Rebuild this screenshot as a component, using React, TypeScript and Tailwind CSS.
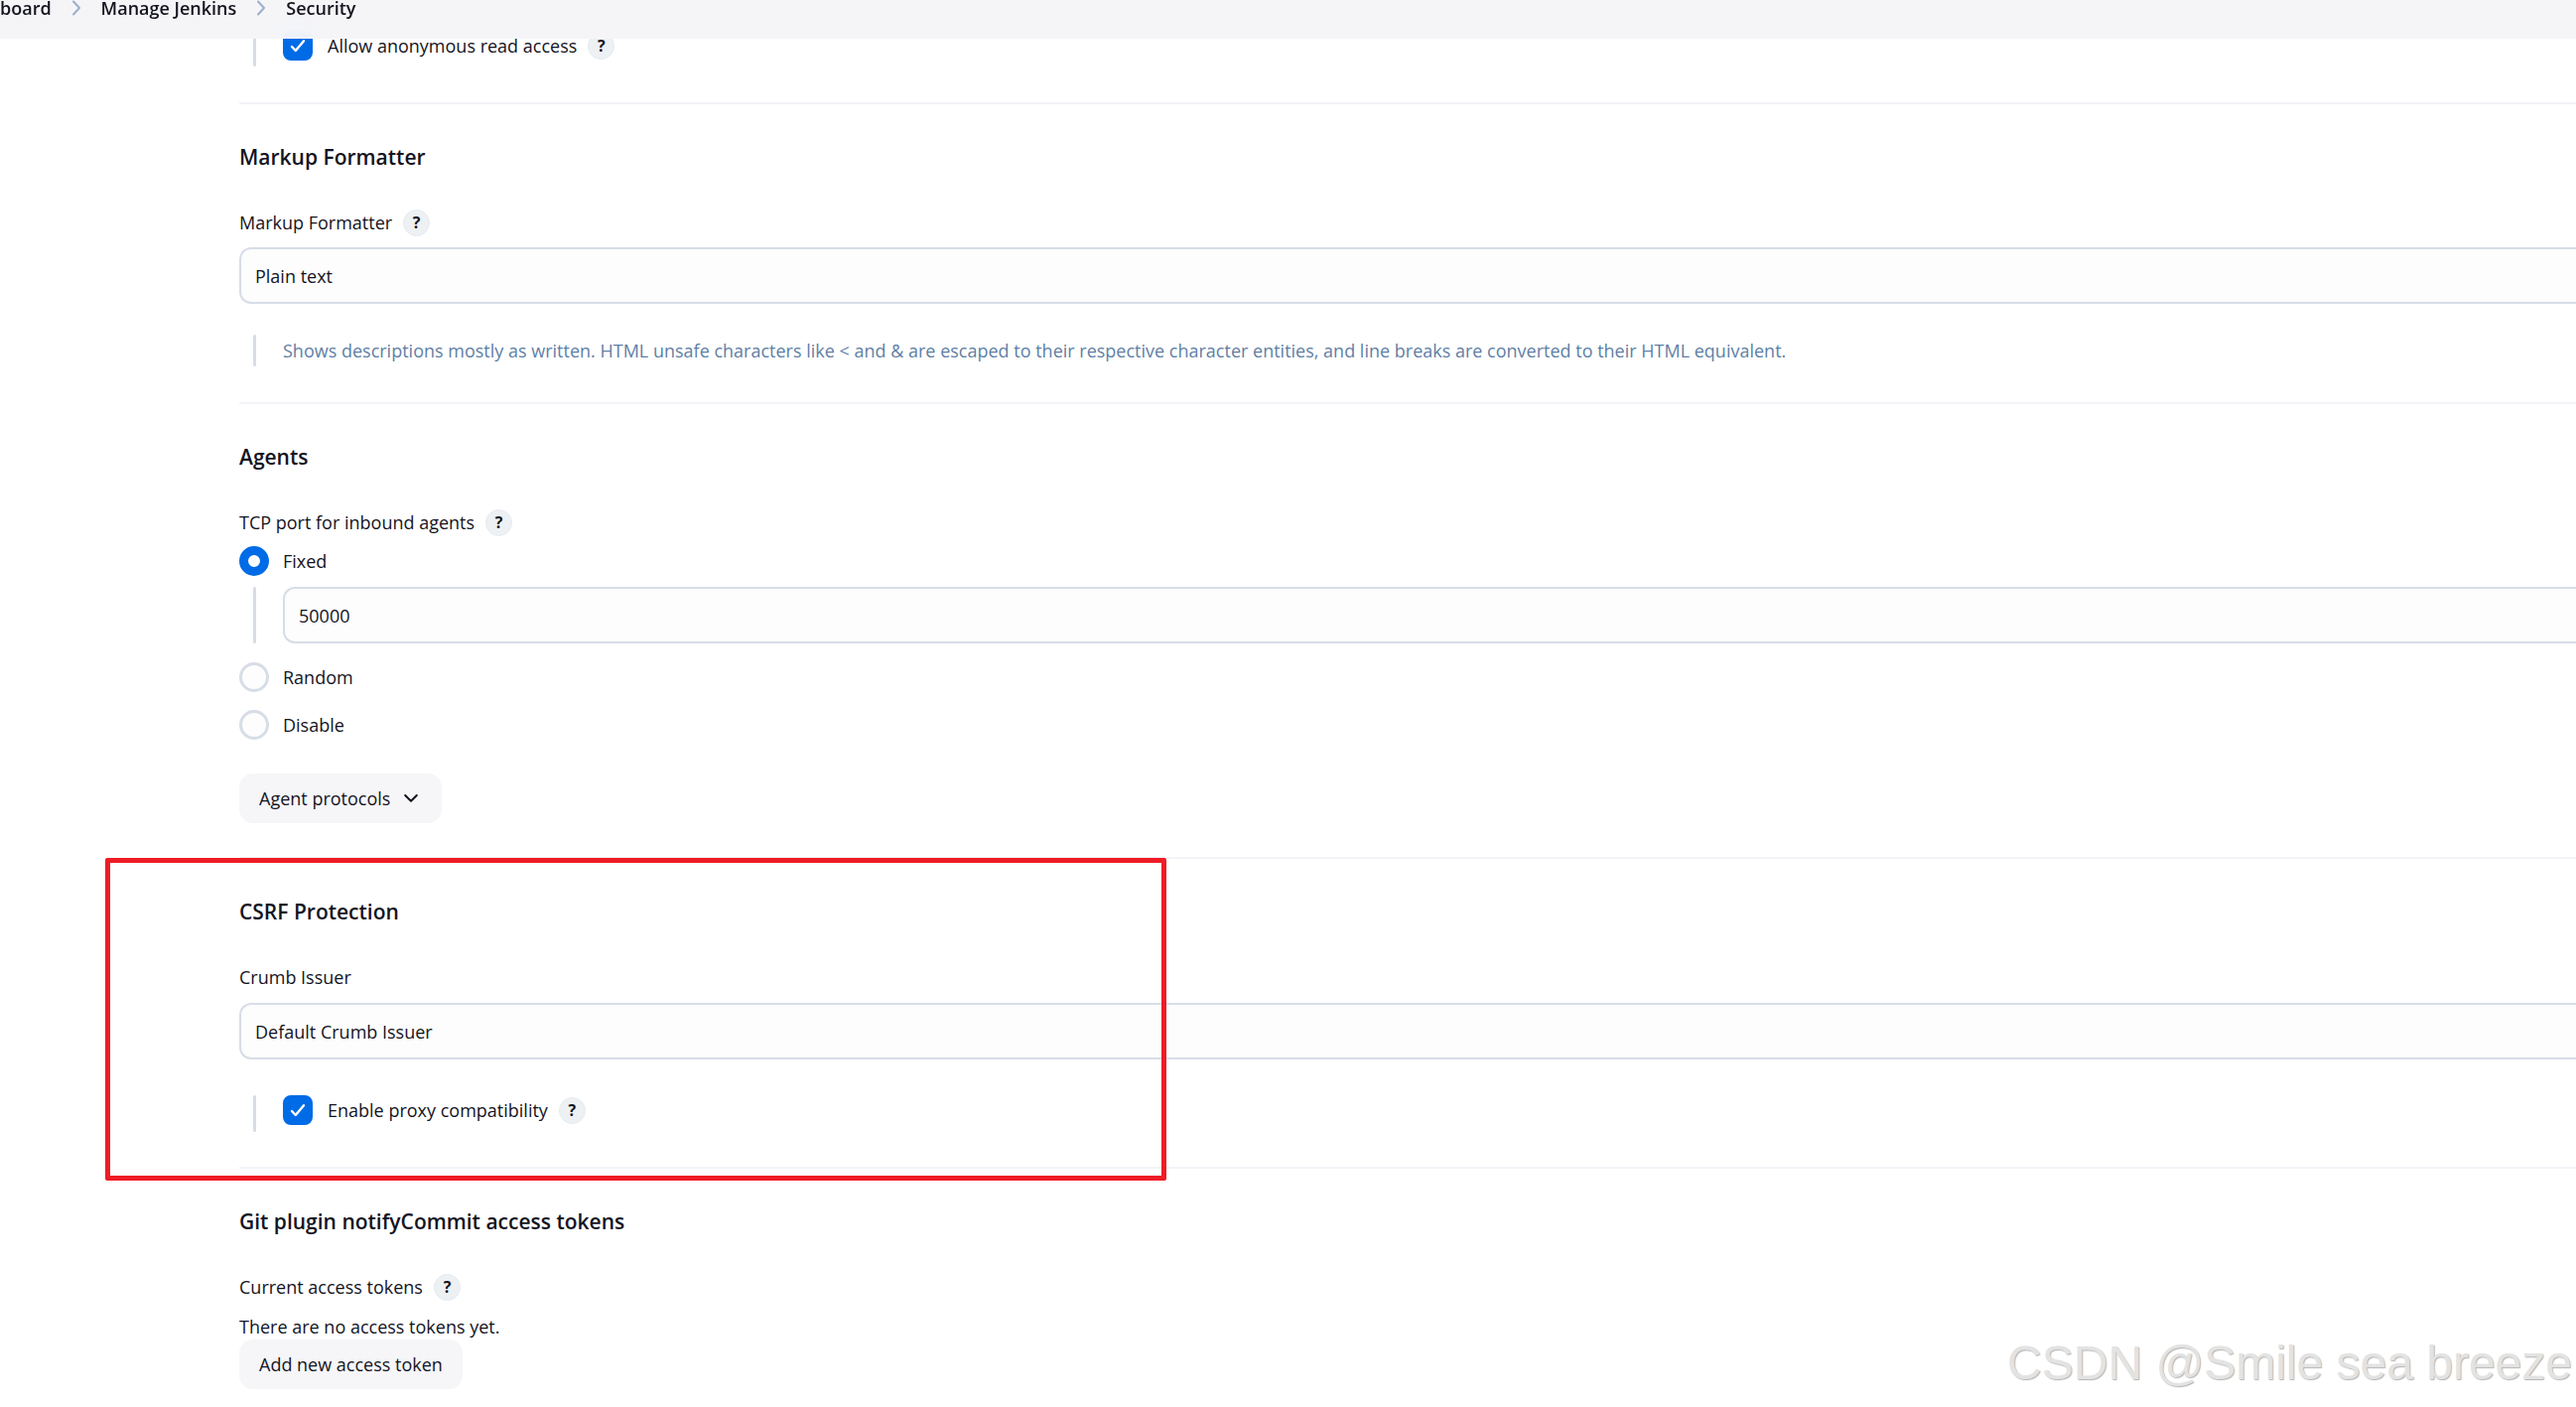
import { useState } from 'react'
import type { ReactNode } from 'react'

const crumbs = ['board', 'Manage Jenkins', 'Security']

function Help({ topic }: { topic: string }) {
  return (
    <button type="button" aria-label={`Help for ${topic}`}
      className="flex h-[27px] w-[27px] items-center justify-center rounded-full border border-[#e6eaef] bg-[#edf1f4] text-[16px] leading-none font-bold text-[#14141f]">
      ?
    </button>
  )
}

function Section({ title, children }: { title: string; children: ReactNode }) {
  return (
    <section className="relative border-t-2 border-[#f3f3f8] pt-[37px]">
      <h2 className="mb-9 text-[21px] leading-8 font-semibold">{title}</h2>
      {children}
    </section>
  )
}

// content nested under an option, with a vertical rule on its left
function Nested({ children }: { children: ReactNode }) {
  return (
    <div className="flex gap-[27px] pl-[14px]">
      <span className="w-[3px] shrink-0 rounded-full bg-[#d7dde7]" />
      <div className="min-w-0 grow">{children}</div>
    </div>
  )
}

function Checkbox({ id, label }: { id: string; label: string }) {
  const [checked, setChecked] = useState(true)

  return (
    <div className="flex items-center">
      <span className="grid h-[30px] w-[30px] place-items-center">
        <input id={id} type="checkbox" checked={checked} onChange={e => setChecked(e.target.checked)}
          className="col-start-1 row-start-1 h-[30px] w-[30px] appearance-none rounded-lg border-2 border-[#d7dde7] bg-[#fdfdfd] checked:border-[#006be6] checked:bg-[#006be6]" />
        {checked && (
          <svg viewBox="0 0 16 16" fill="none" stroke="white" strokeWidth="2.4" strokeLinecap="round" strokeLinejoin="round"
            className="pointer-events-none col-start-1 row-start-1 h-4 w-4">
            <path d="M2 9 5.8 13 14 3.2" />
          </svg>
        )}
      </span>
      <label htmlFor={id} className="mr-[11px] ml-[15px]">{label}</label>
      <Help topic={label} />
    </div>
  )
}

function Select({ id, options }: { id: string; options: string[] }) {
  return (
    <select id={id}
      className="block h-[57px] w-full appearance-none rounded-l-xl border-2 border-r-0 border-[#d7dde7] bg-[#fdfdfd] px-[14px]">
      {options.map(o => <option key={o}>{o}</option>)}
    </select>
  )
}

export default function App() {
  const [port, setPort] = useState('50000')
  const [mode, setMode] = useState('Fixed')

  function radio(value: string) {
    return (
      <label className="flex h-[30px] items-center gap-[14px]">
        <input type="radio" name="port-mode" checked={mode === value} onChange={() => setMode(value)}
          className="h-[30px] w-[30px] appearance-none rounded-full border-[3px] border-[#d7dde7] bg-[#fdfdfd] checked:border-[9px] checked:border-[#006be6] checked:bg-white" />
        {value}
      </label>
    )
  }

  return (
    <div className="relative min-h-screen overflow-hidden bg-white font-['Open_Sans',sans-serif] text-[18px] leading-[26px] text-[#14141f]">
      <header className="sticky top-0 z-10 h-[39px] bg-[#f4f4f8]/95 backdrop-blur-[15px]">
        <nav aria-label="Breadcrumb" className="flex gap-[21px] leading-4 font-semibold">
          {crumbs.map((c, i) => (
            <span key={c} className="flex items-center gap-[21px]">
              {i > 0 && (
                <svg viewBox="0 0 8 16" fill="none" stroke="currentColor" strokeWidth="2" strokeLinecap="round" strokeLinejoin="round" className="h-4 w-2 text-[#9bb0cb]">
                  <path d="M1 1.5 7 8 1 14.5" />
                </svg>
              )}
              <a href="#">{c}</a>
            </span>
          ))}
        </nav>
      </header>

      <main className="-mt-2 pl-[241px]">
        <div className="pb-9">
          <Nested>
            <div className="pb-[6px]">
              <Checkbox id="anonymous-read" label="Allow anonymous read access" />
            </div>
          </Nested>
        </div>

        <Section title="Markup Formatter">
          <div className="mb-[11px] flex h-7 items-center gap-[11px]">
            <label htmlFor="formatter">Markup Formatter</label>
            <Help topic="Markup Formatter" />
          </div>
          <Select id="formatter" options={['Plain text', 'Safe HTML']} />
          <div className="pt-[31px] pb-9">
            <Nested>
              <p className="leading-8 text-[#5f7fa6]">
                Shows descriptions mostly as written. HTML unsafe characters like &lt; and &amp; are escaped to their respective character entities, and line breaks are converted to their HTML equivalent.
              </p>
            </Nested>
          </div>
        </Section>

        <Section title="Agents">
          <div className="mb-[10px] flex h-7 items-center gap-[11px]">
            <span>TCP port for inbound agents</span>
            <Help topic="TCP port for inbound agents" />
          </div>
          {radio('Fixed')}
          <div className="pt-[11px] pb-[19px]">
            <Nested>
              <input type="text" aria-label="Fixed port" value={port} onChange={e => setPort(e.target.value)}
                className="block h-[57px] w-full rounded-l-xl border-2 border-r-0 border-[#d7dde7] bg-[#fdfdfd] px-[14px]" />
            </Nested>
          </div>
          <div className="flex flex-col gap-[18px]">
            {radio('Random')}
            {radio('Disable')}
          </div>
          <div className="py-[34px]">
            <button type="button" className="flex h-[50px] items-center gap-[14px] rounded-[14px] bg-[#f6f6f9] pr-6 pl-5">
              Agent protocols
              <svg viewBox="0 0 14 8" fill="none" stroke="currentColor" strokeWidth="2" strokeLinecap="round" strokeLinejoin="round" className="h-2 w-[14px]">
                <path d="M1.2 1 7 6.8 12.8 1" />
              </svg>
            </button>
          </div>
        </Section>

        <Section title="CSRF Protection">
          <div className="mb-3 flex h-7 items-center">
            <label htmlFor="crumb-issuer">Crumb Issuer</label>
          </div>
          <Select id="crumb-issuer" options={['Default Crumb Issuer', 'Strict Crumb Issuer']} />
          <div className="pt-9 pb-[35px]">
            <Nested>
              <div className="pb-[7px]">
                <Checkbox id="proxy-compat" label="Enable proxy compatibility" />
              </div>
            </Nested>
          </div>
          <div className="pointer-events-none absolute -top-px -bottom-[14px] -left-[135px] z-10 w-[1069px] rounded-xs border-[5px] border-[#ee1c25]" />
        </Section>

        <Section title="Git plugin notifyCommit access tokens">
          <div className="mb-[13px] flex h-7 items-center gap-[11px]">
            <span>Current access tokens</span>
            <Help topic="Current access tokens" />
          </div>
          <p>There are no access tokens yet.</p>
          <button type="button" className="h-[50px] rounded-[14px] bg-[#f6f6f9] px-5">Add new access token</button>
        </Section>
      </main>

      <div className="absolute right-1 bottom-[14px] font-['Liberation_Sans',sans-serif] text-[48px] leading-[60px] text-[#e3e3e3] [text-shadow:1px_1px_1px_#b4b4b4]">
        CSDN @Smile sea breeze
      </div>
    </div>
  )
}
